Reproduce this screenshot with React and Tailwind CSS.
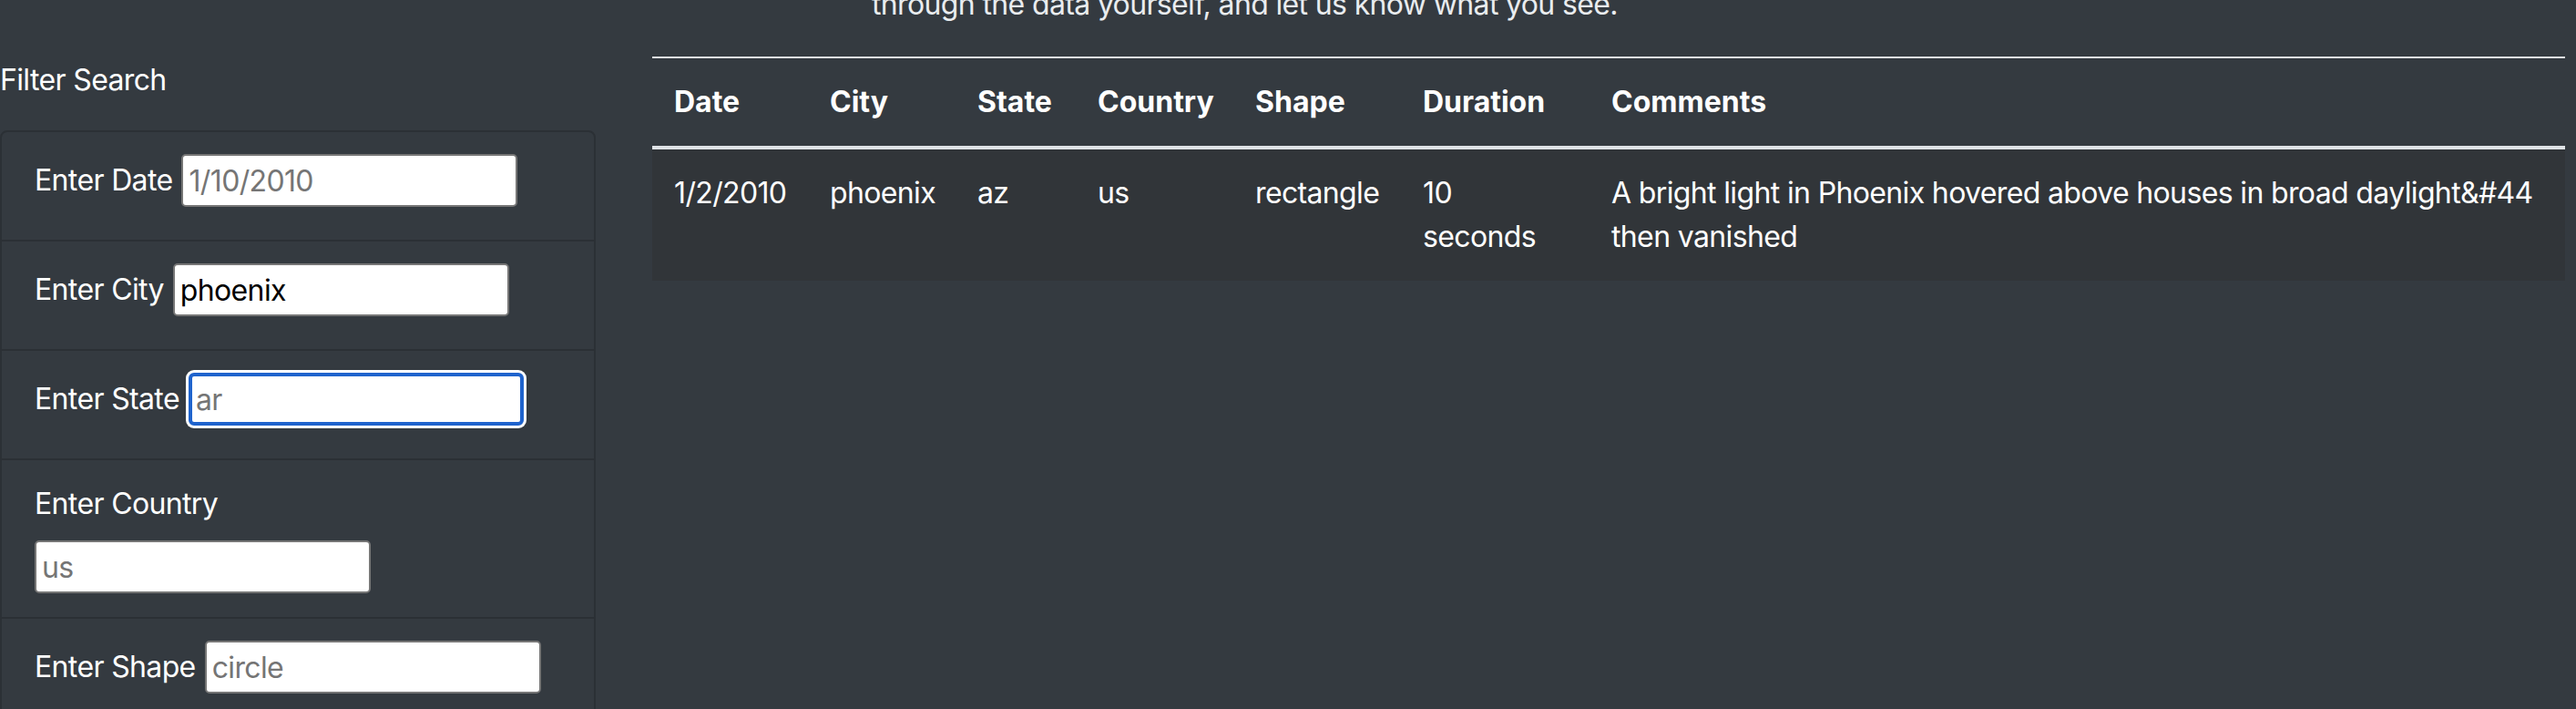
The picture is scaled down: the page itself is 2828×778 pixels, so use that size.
export default function App() {
  const inputBase =
    "h-[58px] w-[369px] shrink-0 rounded-[5px] border-2 border-[#767676] bg-white px-[6px] text-[32px] leading-[40px] tracking-[-0.02em] text-black placeholder:text-[#757575] outline-none font-['Inter',sans-serif]";
  return (
    <div className="flex h-[778px] w-[2828px] overflow-hidden bg-[#343a40] font-['Inter',sans-serif] text-[32px] leading-[48px] text-white">
      <div className="flex w-[654px] shrink-0 flex-col">
        <div className="h-[112px] pt-[64px] tracking-[-0.02em]">Filter Search</div>
        <div className="mt-[31px] rounded-t-[8px] border-2 border-[#2b3035] tracking-[-0.02em]">
          <div className="pl-[36px] pr-[38px] pt-[24px] pb-[36px]">
            <div className="flex h-[58px] items-center">
              <label>Enter Date</label>
              <input className={inputBase + " ml-[10px]"} placeholder="1/10/2010" />
            </div>
          </div>
          <div className="border-t-2 border-[#2b3035] pl-[36px] pr-[38px] pt-[24px] pb-[36px]">
            <div className="flex h-[58px] items-center">
              <label>Enter City</label>
              <input className={inputBase + " ml-[10px]"} defaultValue="phoenix" />
            </div>
          </div>
          <div className="border-t-2 border-[#2b3035] pl-[36px] pr-[38px] pt-[24px] pb-[36px]">
            <div className="flex h-[58px] items-center">
              <label>Enter State</label>
              <input
                className="ml-[10px] h-[58px] w-[368px] shrink-0 rounded-[6px] border-4 border-[#1f63cd] bg-white px-[4px] font-['Inter',sans-serif] text-[32px] leading-[40px] tracking-[-0.02em] text-black shadow-[0_0_0_3px_#ffffff] outline-none placeholder:text-[#757575]"
                placeholder="ar"
              />
            </div>
          </div>
          <div className="border-t-2 border-[#2b3035] pl-[36px] pr-[38px] pt-[24px] pb-[26px]">
            <label className="block">Enter Country</label>
            <input className={inputBase + " mt-[16px] block"} placeholder="us" />
          </div>
          <div className="border-t-2 border-[#2b3035] pl-[36px] pr-[38px] pt-[24px] pb-[36px]">
            <div className="flex h-[58px] items-center">
              <label>Enter Shape</label>
              <input className={inputBase + " ml-[10px]"} placeholder="circle" />
            </div>
          </div>
        </div>
      </div>
      <div className="ml-[62px] flex w-[2100px] shrink-0 flex-col">
        <p className="mt-[-19px] ml-[241px] whitespace-nowrap tracking-[-0.02em] text-[#e9ecef]">
          through the data yourself, and let us know what you see.
        </p>
        <table className="mt-[33px] w-[2100px] table-fixed border-separate border-spacing-0 text-left">
          <colgroup>
            <col className="w-[171px]" />
            <col className="w-[162px]" />
            <col className="w-[132px]" />
            <col className="w-[173px]" />
            <col className="w-[184px]" />
            <col className="w-[207px]" />
            <col className="w-[1071px]" />
          </colgroup>
          <thead>
            <tr>
              {["Date", "City", "State", "Country", "Shape", "Duration", "Comments"].map((h) => (
                <th
                  key={h}
                  className="border-t-2 border-b-4 border-[#dee2e6] px-[24px] py-[24px] align-bottom font-bold whitespace-nowrap"
                >
                  {h}
                </th>
              ))}
            </tr>
          </thead>
          <tbody className="tracking-[-0.02em]">
            <tr className="bg-[#313539]">
              <td className="px-[24px] py-[24px] align-top whitespace-nowrap">1/2/2010</td>
              <td className="px-[24px] py-[24px] align-top whitespace-nowrap">phoenix</td>
              <td className="px-[24px] py-[24px] align-top whitespace-nowrap">az</td>
              <td className="px-[24px] py-[24px] align-top whitespace-nowrap">us</td>
              <td className="px-[24px] py-[24px] align-top whitespace-nowrap">rectangle</td>
              <td className="px-[24px] py-[24px] align-top whitespace-nowrap">
                10
                <br />
                seconds
              </td>
              <td className="px-[24px] py-[24px] align-top whitespace-nowrap">
                A bright light in Phoenix hovered above houses in broad daylight&amp;#44
                <br />
                then vanished
              </td>
            </tr>
          </tbody>
        </table>
      </div>
    </div>
  );
}
